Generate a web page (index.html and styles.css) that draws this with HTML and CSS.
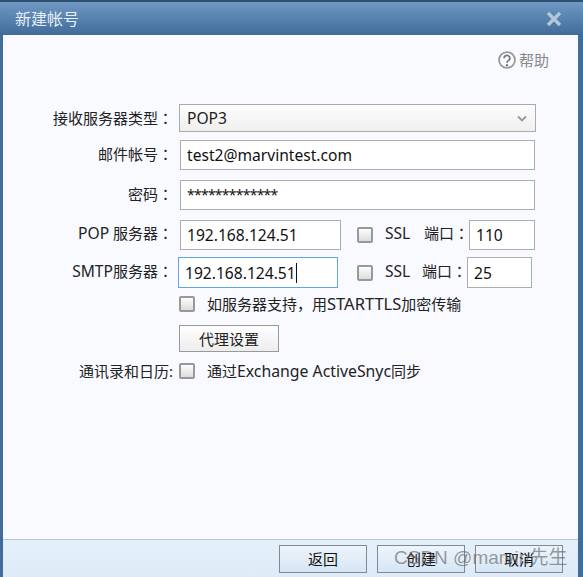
FILE: index.html
```html
<!DOCTYPE html>
<html lang="zh-CN">
<head>
<meta charset="utf-8">
<title>新建帐号</title>
<link rel="stylesheet" href="styles.css">
</head>
<body>
<div class="window">
  <header class="titlebar">
    <span class="title">新建帐号</span>
    <svg class="close" width="16" height="16" viewBox="0 0 16 16"><path d="M2 2 14 14M14 2 2 14" stroke="#b3c8dc" stroke-width="3.200" fill="none"/></svg>
  </header>
  <main class="content">
    <div class="help">
      <svg width="18" height="18" viewBox="0 0 20 20"><circle cx="10" cy="10" r="8.800" fill="#fafbff" stroke="#999" stroke-width="2"/><path d="M6.800 8a3.200 3 0 1 1 5 2.400C10.700 11.200 10 11.700 10 13" fill="none" stroke="#777" stroke-width="2"/><circle cx="10" cy="15.700" r="1.300" fill="#777"/></svg>
      <span>帮助</span>
    </div>
    <div class="row row-select">
      <div class="label">接收服务器类型<span class="colon" lang="zh-Hant">：</span></div>
      <div class="select"><span class="lat">POP3</span>
        <svg width="10" height="7" viewBox="0 0 10 7"><path d="M1 1.500 5 5.500l4-4" fill="none" stroke="#999" stroke-width="1.800"/></svg>
      </div>
    </div>
    <div class="row row-account">
      <div class="label">邮件帐号<span class="colon" lang="zh-Hant">：</span></div>
      <div class="input full lat">test2@marvintest.com</div>
    </div>
    <div class="row row-password">
      <div class="label">密码<span class="colon" lang="zh-Hant">：</span></div>
      <div class="input full stars">*************</div>
    </div>
    <div class="row row-pop">
      <div class="label"><span class="lat">POP</span> 服务器<span class="colon" lang="zh-Hant">：</span></div>
      <div class="input host lat">192.168.124.51</div>
      <div class="check ssl-check"></div>
      <span class="ssl lat">SSL</span>
      <span class="port-label">端口<span class="colon" lang="zh-Hant">：</span></span>
      <div class="input port lat">110</div>
    </div>
    <div class="row row-smtp">
      <div class="label"><span class="lat">SMTP</span>服务器<span class="colon" lang="zh-Hant">：</span></div>
      <div class="input host focus lat">192.168.124.51<span class="caret"></span></div>
      <div class="check ssl-check"></div>
      <span class="ssl lat">SSL</span>
      <span class="port-label">端口<span class="colon" lang="zh-Hant">：</span></span>
      <div class="input port lat">25</div>
    </div>
    <div class="row row-tls">
      <div class="check"></div>
      <span class="check-text">如服务器支持，用<span class="lat-caps">STARTTLS</span>加密传输</span>
    </div>
    <div class="row row-proxy">
      <div class="button proxy">代理设置</div>
    </div>
    <div class="row row-sync">
      <div class="label">通讯录和日历:</div>
      <div class="check"></div>
      <span class="check-text">通过<span class="lat-wide">Exchange ActiveSnyc</span>同步</span>
    </div>
  </main>
  <footer class="footer">
    <div class="button action">返回</div>
    <div class="button action">创建</div>
    <div class="button action">取消</div>
  </footer>
</div>
<div class="watermark">CSDN @marvin先生</div>
</body>
</html>
```
FILE: styles.css
```css
* { box-sizing: border-box; }
html, body { margin: 0; padding: 0; }
body {
  width: 583px;
  height: 577px;
  overflow: hidden;
  position: relative;
  font: 15px/20px "Noto Sans", "Noto Sans CJK SC", sans-serif;
  color: #222;
  background: #fff;
}
.lat { font-size: 15.6px; }
.lat-wide { font-size: 15.800px; }
.lat-caps { font-size: 16.500px; }
.window {
  width: 578px;
  height: 577px;
  display: flex;
  flex-direction: column;
  border-left: 3px solid #426c9a;
  box-shadow: 5px 0 0 #426c9a;
}
.titlebar {
  height: 35px;
  flex: none;
  margin-left: -3px;
  margin-right: -5px;
  padding: 0 21px 0 15px;
  display: flex;
  align-items: center;
  justify-content: space-between;
  border-top: 2px solid #2f5070;
  background: linear-gradient(#6f99c3, #416b99);
}
.title { font-size: 16px; color: #e4eef8; }
.content {
  flex: 1;
  background: #f9faff;
  display: flex;
  flex-direction: column;
}
.help {
  height: 18px;
  margin: 16px 29px 0 0;
  display: flex;
  justify-content: flex-end;
  align-items: center;
  gap: 3px;
  color: #888;
}
.row { display: flex; align-items: center; }
.label { width: 170px; text-align: right; flex: none; }
.colon { font-family: "Noto Sans CJK TC", sans-serif; font-size: 15px; }
.row-select { margin-top: 35px; height: 28px; }
.row-account { margin-top: 8px; height: 30px; }
.row-password { margin-top: 10px; height: 30px; }
.row-pop { margin-top: 10px; height: 30px; }
.row-smtp { margin-top: 7px; height: 31px; }
.row-tls { margin-top: 8px; height: 16px; padding-left: 176px; }
.row-proxy { margin-top: 13px; height: 27px; padding-left: 176px; }
.row-sync { margin-top: 11px; height: 16px; }
.row-account .label, .row-password .label { margin-bottom: 2px; }
.row-pop .label, .row-pop .ssl, .row-pop .port-label { margin-bottom: 4px; }
.row-smtp .label, .row-smtp .ssl, .row-smtp .port-label { margin-bottom: 4px; }
.select {
  width: 357px;
  height: 28px;
  margin-left: 6px;
  padding: 0 8px 0 7px;
  display: flex;
  align-items: center;
  justify-content: space-between;
  border: 1px solid #aaa;
  background: linear-gradient(#fdfdfd, #efefef);
}
.input {
  height: 100%;
  padding: 0 6px;
  display: flex;
  align-items: center;
  border: 1px solid #adadad;
  background: #fff;
  color: #111;
}
.stars { font-size: 14px; letter-spacing: -0.750px; }
.full { width: 355px; margin-left: 7px; }
.host { width: 161px; margin-left: 7px; }
.focus { width: 160px; margin-left: 5px; border-color: #62a4ec; }
.caret { width: 1px; height: 20px; background: #111; }
.check {
  width: 16px;
  height: 16px;
  flex: none;
  border: 2px solid #999;
  border-radius: 2px;
  background: linear-gradient(#fdfdfd, #dcdcdc);
}
.ssl-check { margin-left: 16px; }
.row-smtp .ssl-check { margin-left: 19px; }
.ssl { margin-left: 12px; width: 39px; flex: none; }
.port-label { width: 45px; flex: none; white-space: nowrap; }
.row-smtp .port-label { margin-left: -2px; }
.port { width: 66px; }
.row-smtp .port { width: 65px; }
.check-text { margin-left: 12px; white-space: nowrap; }
.row-sync .label { margin-right: 6px; }
.button {
  display: flex;
  align-items: center;
  justify-content: center;
  border: 1px solid #999;
}
.proxy {
  width: 100px;
  height: 27px;
  background: linear-gradient(#fefefe, #ededed);
}
.footer {
  height: 38px;
  flex: none;
  padding: 5px 15px 0 0;
  display: flex;
  justify-content: flex-end;
  gap: 10px;
  border-top: 1px solid #b9c4d3;
  background: linear-gradient(#e3eff9, #dfebf6);
}
.action {
  width: 88px;
  height: 28px;
  border-color: #7f8a96;
  background: linear-gradient(#edf4fb, #d6e6f5);
  color: #111;
}
.watermark {
  position: absolute;
  left: 394px;
  top: 546px;
  white-space: nowrap;
  font: 19px/24px "Liberation Sans", "Noto Sans CJK SC", sans-serif;
  color: rgba(90, 90, 90, 0.6);
}
```
